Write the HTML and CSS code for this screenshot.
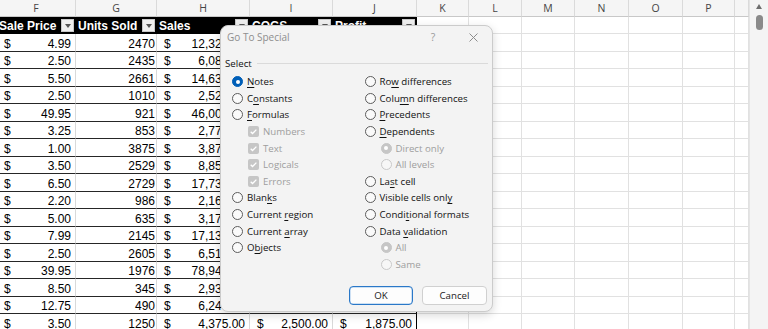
FILE: index.html
```html
<!DOCTYPE html>
<html lang="en">
<head>
<meta charset="utf-8">
<title>Go To Special</title>
<link rel="stylesheet" href="styles.css">
</head>
<body>
<div class="app">
  <div class="sheet">
    <div class="row colhdr">
      <div class="c">F</div><div class="c">G</div><div class="c">H</div><div class="c">I</div><div class="c">J</div><div class="c">K</div><div class="c">L</div><div class="c">M</div><div class="c">N</div><div class="c">O</div><div class="c">P</div><div class="c"></div>
    </div>
    <div class="row thead">
      <div class="c t"><span>Sale Price</span><span class="dd"></span></div>
      <div class="c t"><span>Units Sold</span><span class="dd"></span></div>
      <div class="c t"><span>Sales</span><span class="dd"></span></div>
      <div class="c t"><span>COGS</span><span class="dd"></span></div>
      <div class="c t j"><span>Profit</span><span class="dd"></span></div>
      <div class="c"></div><div class="c"></div><div class="c"></div><div class="c"></div><div class="c"></div><div class="c"></div><div class="c"></div>
    </div>
    <div class="row d"><div class="c t acc"><span>$</span><span>4.99</span></div><div class="c t num">2470</div><div class="c t acc"><span>$</span><span>12,325.30</span></div><div class="c t acc"></div><div class="c t j acc"></div><div class="c"></div><div class="c"></div><div class="c"></div><div class="c"></div><div class="c"></div><div class="c"></div><div class="c"></div></div>
    <div class="row d"><div class="c t acc"><span>$</span><span>2.50</span></div><div class="c t num">2435</div><div class="c t acc"><span>$</span><span>6,087.50</span></div><div class="c t acc"></div><div class="c t j acc"></div><div class="c"></div><div class="c"></div><div class="c"></div><div class="c"></div><div class="c"></div><div class="c"></div><div class="c"></div></div>
    <div class="row d"><div class="c t acc"><span>$</span><span>5.50</span></div><div class="c t num">2661</div><div class="c t acc"><span>$</span><span>14,635.50</span></div><div class="c t acc"></div><div class="c t j acc"></div><div class="c"></div><div class="c"></div><div class="c"></div><div class="c"></div><div class="c"></div><div class="c"></div><div class="c"></div></div>
    <div class="row d"><div class="c t acc"><span>$</span><span>2.50</span></div><div class="c t num">1010</div><div class="c t acc"><span>$</span><span>2,525.00</span></div><div class="c t acc"></div><div class="c t j acc"></div><div class="c"></div><div class="c"></div><div class="c"></div><div class="c"></div><div class="c"></div><div class="c"></div><div class="c"></div></div>
    <div class="row d"><div class="c t acc"><span>$</span><span>49.95</span></div><div class="c t num">921</div><div class="c t acc"><span>$</span><span>46,003.95</span></div><div class="c t acc"></div><div class="c t j acc"></div><div class="c"></div><div class="c"></div><div class="c"></div><div class="c"></div><div class="c"></div><div class="c"></div><div class="c"></div></div>
    <div class="row d"><div class="c t acc"><span>$</span><span>3.25</span></div><div class="c t num">853</div><div class="c t acc"><span>$</span><span>2,772.25</span></div><div class="c t acc"></div><div class="c t j acc"></div><div class="c"></div><div class="c"></div><div class="c"></div><div class="c"></div><div class="c"></div><div class="c"></div><div class="c"></div></div>
    <div class="row d"><div class="c t acc"><span>$</span><span>1.00</span></div><div class="c t num">3875</div><div class="c t acc"><span>$</span><span>3,875.00</span></div><div class="c t acc"></div><div class="c t j acc"></div><div class="c"></div><div class="c"></div><div class="c"></div><div class="c"></div><div class="c"></div><div class="c"></div><div class="c"></div></div>
    <div class="row d"><div class="c t acc"><span>$</span><span>3.50</span></div><div class="c t num">2529</div><div class="c t acc"><span>$</span><span>8,851.50</span></div><div class="c t acc"></div><div class="c t j acc"></div><div class="c"></div><div class="c"></div><div class="c"></div><div class="c"></div><div class="c"></div><div class="c"></div><div class="c"></div></div>
    <div class="row d"><div class="c t acc"><span>$</span><span>6.50</span></div><div class="c t num">2729</div><div class="c t acc"><span>$</span><span>17,738.50</span></div><div class="c t acc"></div><div class="c t j acc"></div><div class="c"></div><div class="c"></div><div class="c"></div><div class="c"></div><div class="c"></div><div class="c"></div><div class="c"></div></div>
    <div class="row d"><div class="c t acc"><span>$</span><span>2.20</span></div><div class="c t num">986</div><div class="c t acc"><span>$</span><span>2,169.20</span></div><div class="c t acc"></div><div class="c t j acc"></div><div class="c"></div><div class="c"></div><div class="c"></div><div class="c"></div><div class="c"></div><div class="c"></div><div class="c"></div></div>
    <div class="row d"><div class="c t acc"><span>$</span><span>5.00</span></div><div class="c t num">635</div><div class="c t acc"><span>$</span><span>3,175.00</span></div><div class="c t acc"></div><div class="c t j acc"></div><div class="c"></div><div class="c"></div><div class="c"></div><div class="c"></div><div class="c"></div><div class="c"></div><div class="c"></div></div>
    <div class="row d"><div class="c t acc"><span>$</span><span>7.99</span></div><div class="c t num">2145</div><div class="c t acc"><span>$</span><span>17,138.55</span></div><div class="c t acc"></div><div class="c t j acc"></div><div class="c"></div><div class="c"></div><div class="c"></div><div class="c"></div><div class="c"></div><div class="c"></div><div class="c"></div></div>
    <div class="row d"><div class="c t acc"><span>$</span><span>2.50</span></div><div class="c t num">2605</div><div class="c t acc"><span>$</span><span>6,512.50</span></div><div class="c t acc"></div><div class="c t j acc"></div><div class="c"></div><div class="c"></div><div class="c"></div><div class="c"></div><div class="c"></div><div class="c"></div><div class="c"></div></div>
    <div class="row d"><div class="c t acc"><span>$</span><span>39.95</span></div><div class="c t num">1976</div><div class="c t acc"><span>$</span><span>78,941.20</span></div><div class="c t acc"></div><div class="c t j acc"></div><div class="c"></div><div class="c"></div><div class="c"></div><div class="c"></div><div class="c"></div><div class="c"></div><div class="c"></div></div>
    <div class="row d"><div class="c t acc"><span>$</span><span>8.50</span></div><div class="c t num">345</div><div class="c t acc"><span>$</span><span>2,932.50</span></div><div class="c t acc"></div><div class="c t j acc"></div><div class="c"></div><div class="c"></div><div class="c"></div><div class="c"></div><div class="c"></div><div class="c"></div><div class="c"></div></div>
    <div class="row d"><div class="c t acc"><span>$</span><span>12.75</span></div><div class="c t num">490</div><div class="c t acc"><span>$</span><span>6,247.50</span></div><div class="c t acc"></div><div class="c t j acc"></div><div class="c"></div><div class="c"></div><div class="c"></div><div class="c"></div><div class="c"></div><div class="c"></div><div class="c"></div></div>
    <div class="row d"><div class="c t acc"><span>$</span><span>3.50</span></div><div class="c t num">1250</div><div class="c t acc"><span>$</span><span>4,375.00</span></div><div class="c t acc"><span>$</span><span>2,500.00</span></div><div class="c t j acc"><span>$</span><span>1,875.00</span></div><div class="c"></div><div class="c"></div><div class="c"></div><div class="c"></div><div class="c"></div><div class="c"></div><div class="c"></div></div>
  </div>
  <div class="vscroll">
    <span class="arrow"></span>
    <span class="thumb"></span>
  </div>

  <div class="dialog">
    <div class="titlebar">
      <span class="title">Go To Special</span>
      <span class="tb-help">?</span>
      <span class="tb-close"><svg width="9" height="9" viewBox="0 0 9 9"><path d="M0.5 0.5L8.5 8.5M8.5 0.5L0.5 8.5" stroke="#8c8c8c" stroke-width="1" fill="none"/></svg></span>
    </div>
    <div class="body">
      <div class="group"><span>Select</span><span class="rule"></span></div>
      <div class="options">
        <div class="col">
          <div class="opt"><span class="radio on"></span><span><u>N</u>otes</span></div>
          <div class="opt"><span class="radio"></span><span>C<u>o</u>nstants</span></div>
          <div class="opt"><span class="radio"></span><span><u>F</u>ormulas</span></div>
          <div class="opt sub dis"><span class="check"><svg width="11" height="11" viewBox="0 0 11 11"><path d="M2.7 5.7L4.5 7.5L8.4 3.6" fill="none" stroke="#fff" stroke-width="1.3"/></svg></span><span>Numbers</span></div>
          <div class="opt sub dis"><span class="check"><svg width="11" height="11" viewBox="0 0 11 11"><path d="M2.7 5.7L4.5 7.5L8.4 3.6" fill="none" stroke="#fff" stroke-width="1.3"/></svg></span><span>Text</span></div>
          <div class="opt sub dis"><span class="check"><svg width="11" height="11" viewBox="0 0 11 11"><path d="M2.7 5.7L4.5 7.5L8.4 3.6" fill="none" stroke="#fff" stroke-width="1.3"/></svg></span><span>Logicals</span></div>
          <div class="opt sub dis"><span class="check"><svg width="11" height="11" viewBox="0 0 11 11"><path d="M2.7 5.7L4.5 7.5L8.4 3.6" fill="none" stroke="#fff" stroke-width="1.3"/></svg></span><span>Errors</span></div>
          <div class="opt"><span class="radio"></span><span>Blan<u>k</u>s</span></div>
          <div class="opt"><span class="radio"></span><span>Current <u>r</u>egion</span></div>
          <div class="opt"><span class="radio"></span><span>Current <u>a</u>rray</span></div>
          <div class="opt"><span class="radio"></span><span>O<u>b</u>jects</span></div>
        </div>
        <div class="col">
          <div class="opt"><span class="radio"></span><span>Ro<u>w</u> differences</span></div>
          <div class="opt"><span class="radio"></span><span>Colu<u>m</u>n differences</span></div>
          <div class="opt"><span class="radio"></span><span><u>P</u>recedents</span></div>
          <div class="opt"><span class="radio"></span><span><u>D</u>ependents</span></div>
          <div class="opt sub dis"><span class="radio on"></span><span>Direct only</span></div>
          <div class="opt sub dis"><span class="radio"></span><span>All levels</span></div>
          <div class="opt"><span class="radio"></span><span>La<u>s</u>t cell</span></div>
          <div class="opt"><span class="radio"></span><span>Visible cells onl<u>y</u></span></div>
          <div class="opt"><span class="radio"></span><span>Condi<u>t</u>ional formats</span></div>
          <div class="opt"><span class="radio"></span><span>Data <u>v</u>alidation</span></div>
          <div class="opt sub dis"><span class="radio on"></span><span>All</span></div>
          <div class="opt sub dis"><span class="radio"></span><span>Same</span></div>
        </div>
      </div>
    </div>
    <div class="buttons">
      <span class="btn primary">OK</span>
      <span class="btn cancel">Cancel</span>
    </div>
  </div>
</div>
</body>
</html>
```

FILE: styles.css
```css
* { box-sizing: border-box; }
html, body { margin: 0; padding: 0; }
body {
  width: 768px;
  height: 329px;
  overflow: hidden;
  background: #fff;
  font-family: "Liberation Sans", Arial, sans-serif;
}
.app {
  position: relative;
  display: flex;
  width: 768px;
  height: 329px;
  overflow: hidden;
}
.sheet {
  flex: 1;
  margin-left: -3px;
  overflow: hidden;
}
.row {
  display: grid;
  grid-template-columns: 79px 81px 93px 83px 84px 52px 53px 53px 54px 54px 52px 1fr;
  height: 17.5px;
}
.c {
  display: flex;
  align-items: flex-end;
  border-right: 1px solid #e1e1e1;
  border-bottom: 1px solid #e1e1e1;
  font-size: 12px;
  line-height: 14px;
  color: #000;
  white-space: nowrap;
  overflow: hidden;
}
.colhdr { height: 17px; background: #f5f5f5; }
.colhdr .c {
  align-items: center;
  justify-content: center;
  color: #444;
  font-family: "Open Sans", "Noto Sans", sans-serif;
  font-size: 10.5px;
  border-right-color: #dadada;
  border-bottom-color: #c8c8c8;
}
.thead { height: 17px; }
.thead .t {
  background: #000;
  color: #fff;
  font-weight: bold;
  border-right-color: #000;
  border-bottom-color: #000;
  padding-left: 2px;
  justify-content: space-between;
}
.dd {
  position: relative;
  align-self: center;
  width: 13px;
  height: 13px;
  margin-right: 1px;
  background: #efefef;
  border: 1px solid #c8c8c8;
  flex: none;
}
.dd::after {
  content: "";
  position: absolute;
  left: 2.5px;
  top: 4px;
  border-left: 3.5px solid transparent;
  border-right: 3.5px solid transparent;
  border-top: 4px solid #555;
}
.d .t {
  border-bottom-color: #262626;
  border-right-color: #d9d9d9;
}
.t.j { border-right-color: #000; }
.acc {
  justify-content: space-between;
  padding: 0 4px 0 7px;
}
.num {
  justify-content: flex-end;
  padding-right: 1px;
}

.vscroll {
  width: 19px;
  flex: none;
  background: #f4f4f4;
  border-left: 1px solid #e4e4e4;
  display: flex;
  flex-direction: column;
  align-items: center;
  padding-top: 4px;
}
.arrow {
  width: 0;
  height: 0;
  border-left: 3.5px solid transparent;
  border-right: 3.5px solid transparent;
  border-bottom: 5px solid #6e6e6e;
}
.thumb {
  margin-top: 6px;
  width: 7px;
  height: 15px;
  border-radius: 4px;
  background: #8a8a8a;
}

.dialog {
  position: absolute;
  left: 220px;
  top: 25px;
  width: 273px;
  height: 287px;
  background: #f3f3f3;
  border: 1px solid #cbcbcb;
  border-radius: 8px;
  box-shadow: 0 3px 10px rgba(0, 0, 0, 0.16);
  font-family: "Open Sans", "Noto Sans", sans-serif;
  font-size: 9.7px;
  color: #111;
  display: flex;
  flex-direction: column;
}
.titlebar {
  height: 22px;
  display: flex;
  align-items: center;
  padding-left: 6px;
  color: #8e8e8e;
}
.title { font-size: 10px; flex: 1; }
.tb-help {
  width: 42px;
  text-align: center;
  font-size: 10.5px;
  color: #9a9a9a;
}
.tb-close {
  width: 38px;
  display: flex;
  justify-content: center;
  align-items: center;
}
.body { padding: 0 4px; }
.group {
  margin-top: 8px;
  height: 14px;
  display: flex;
  align-items: center;
}
.rule {
  flex: 1;
  height: 1px;
  margin-left: 5px;
  background: #dadada;
}
.options {
  margin-top: 3.2px;
  padding-left: 7px;
  display: grid;
  grid-template-columns: 132.5px 1fr;
}
.opt {
  height: 16.65px;
  display: flex;
  align-items: center;
  gap: 4px;
  white-space: nowrap;
}
.opt u { text-underline-offset: 1.5px; text-decoration-thickness: 1px; }
.opt.sub { padding-left: 16px; }
.opt.dis { color: #9e9e9e; }
.radio {
  position: relative;
  width: 11px;
  height: 11px;
  flex: none;
  border-radius: 50%;
  border: 1px solid #5c5c5c;
  background: #fafafa;
}
.radio.on {
  background: #005fb8;
  border-color: #005fb8;
}
.radio.on::after {
  content: "";
  position: absolute;
  left: 2.5px;
  top: 2.5px;
  width: 4px;
  height: 4px;
  border-radius: 50%;
  background: #fff;
}
.dis .radio {
  border-color: #c9c9c9;
  background: #f7f7f7;
}
.dis .radio.on {
  background: #c6c6c6;
  border-color: #c6c6c6;
}
.check {
  width: 11px;
  height: 11px;
  flex: none;
  border-radius: 2px;
  background: #c6c6c6;
  display: flex;
}
.buttons {
  margin-top: auto;
  display: flex;
  justify-content: flex-end;
  gap: 9px;
  padding: 0 5px 6px 0;
}
.btn {
  height: 19px;
  display: flex;
  align-items: center;
  justify-content: center;
  background: #fdfdfd;
  border: 1px solid #d0d0d0;
  border-radius: 4px;
  color: #1b1b1b;
}
.btn.primary {
  width: 64px;
  border-color: #2a78c8;
  box-shadow: inset 0 0 0 0.5px #9cc3ea;
}
.btn.cancel { width: 65px; }
```
